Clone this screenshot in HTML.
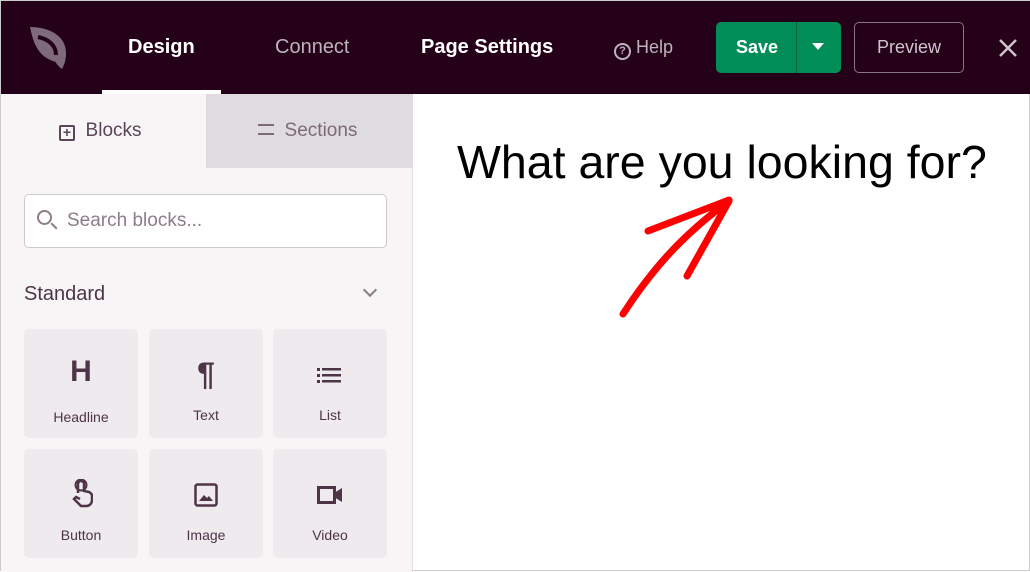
<!DOCTYPE html>
<html><head><style>
*{box-sizing:border-box;margin:0;padding:0}
body{width:1030px;height:571px;overflow:hidden;background:#fff;font-family:"Liberation Sans",sans-serif;position:relative;border:1px solid #ccc}
.top{position:absolute;left:0;top:0;width:1030px;height:93px;background:#250019}
.nav{position:absolute;top:35px;font-size:20px;font-weight:bold;color:#fff}
.side{position:absolute;left:0;top:93px;width:412px;height:478px;background:#f7f5f6;border-right:1px solid #e2dfe2}
.tile{position:absolute;width:114px;height:109px;background:#eeeaee;border-radius:5px;text-align:center;color:#4e3447;font-size:14px}
.tile .l{position:absolute;left:0;right:0;top:78px}
.tile svg{position:absolute;left:45px;top:30px}
</style></head><body>
<div class="top">
<svg style="position:absolute;left:27px;top:24px" width="44" height="46" viewBox="0 0 44 46"><path d="M2 2 C20 2 38 10 38 28 C38 36 36 40 34 44 C28 40 22 30 24 20 C26 14 30 12 32 12 C28 14 26 20 28 28 C30 34 32 38 32 38 C12 34 6 22 2 2Z" fill="#7e6a7a"/><path d="M10 12 C20 14 28 20 28 30" stroke="#250019" stroke-width="4" fill="none"/></svg>
<div class="nav" style="left:127px">Design</div>
<div style="position:absolute;left:101px;top:89px;width:119px;height:4px;background:#fff"></div>
<div class="nav" style="left:274px;color:#bfb2bc;font-weight:normal">Connect</div>
<div class="nav" style="left:420px">Page Settings</div>
<div style="position:absolute;left:613px;top:36px;font-size:18px;color:#bfb2bc"><span style="display:inline-block;width:17px;height:17px;border:2px solid #bfb2bc;border-radius:50%;font-size:11px;text-align:center;line-height:13px;font-weight:bold;vertical-align:-1px">?</span> Help</div>
<div style="position:absolute;left:715px;top:21px;width:125px;height:51px;background:#008d58;border-radius:5px;color:#fff;font-weight:bold;font-size:18px">
<span style="position:absolute;left:20px;top:15px">Save</span>
<div style="position:absolute;left:80px;top:0;width:1px;height:51px;background:#05603f"></div>
<div style="position:absolute;left:96px;top:21px;border:6px solid transparent;border-top:7px solid #fff"></div></div>
<div style="position:absolute;left:853px;top:21px;width:110px;height:51px;border:1px solid #8a7487;border-radius:5px;color:#cfc3cc;font-size:18px;text-align:center;line-height:49px">Preview</div>
<svg style="position:absolute;left:997px;top:37px" width="20" height="20"><path d="M2 2L18 18M18 2L2 18" stroke="#cfc3cc" stroke-width="2.5"/></svg>
</div>
<div class="side">
<div style="position:absolute;left:205px;top:0;width:207px;height:74px;background:#dfdcdf"></div>
<div style="position:absolute;left:58px;top:26px;font-size:19px;color:#5c4557"><span style="display:inline-block;width:16px;height:16px;border:2px solid #5c4557;border-radius:2px;font-size:14px;line-height:11px;text-align:center;font-weight:bold;vertical-align:-1px">+</span>&nbsp; Blocks</div>
<div style="position:absolute;left:257px;top:26px;font-size:19px;color:#7d6a79"><span style="display:inline-block;width:16px;height:11px;border-top:2px solid #7d6a79;border-bottom:2px solid #7d6a79;vertical-align:1px;position:relative"></span>&nbsp; Sections</div>
<div style="position:absolute;left:23px;top:100px;width:363px;height:54px;background:#fff;border:1px solid #cfc8ce;border-radius:5px;color:#8c7c89;font-size:19px;padding:15px 0 0 42px">Search blocks...
<div style="position:absolute;left:12px;top:15px;width:15px;height:15px;border:2px solid #8c7c89;border-radius:50%"></div>
<div style="position:absolute;left:25px;top:30px;width:8px;height:2px;background:#8c7c89;transform:rotate(45deg)"></div></div>
<div style="position:absolute;left:23px;top:189px;font-size:20px;color:#4e3447">Standard</div>
<div style="position:absolute;left:364px;top:191px;width:10px;height:10px;border-right:2px solid #8c7c89;border-bottom:2px solid #8c7c89;transform:rotate(45deg)"></div>
<div class="tile" style="left:23px;top:235px"><div style="position:absolute;left:0;right:0;top:26px;font-size:30px;font-weight:bold">H</div><div class="l" style="top:80px">Headline</div></div>
<div class="tile" style="left:148px;top:235px"><div style="position:absolute;left:0;right:0;top:27px;font-size:32px;font-weight:bold">¶</div><div class="l">Text</div></div>
<div class="tile" style="left:272px;top:235px"><svg width="26" height="20" viewBox="0 0 26 20" style="left:44px;top:37px"><g fill="#4e3447"><rect x="0" y="2" width="3" height="3"/><rect x="0" y="8" width="3" height="3"/><rect x="0" y="14" width="3" height="3"/><rect x="5" y="2" width="19" height="2.5"/><rect x="5" y="8" width="19" height="2.5"/><rect x="5" y="14" width="19" height="2.5"/></g></svg><div class="l">List</div></div>
<div class="tile" style="left:23px;top:355px"><svg width="24" height="30" viewBox="0 0 24 30" style="left:45px;top:30px"><path d="M9 14V5a3 3 0 016 0v7l5 1c2 1 3 2 3 4v4c0 3-2 6-6 6h-5l-7-7 2-2 4 2" fill="none" stroke="#4e3447" stroke-width="2.5"/><circle cx="12" cy="6" r="5.5" fill="none" stroke="#4e3447" stroke-width="2"/></svg><div class="l">Button</div></div>
<div class="tile" style="left:148px;top:355px"><svg width="24" height="24" viewBox="0 0 24 24" style="left:45px;top:34px"><rect x="1.5" y="1.5" width="21" height="21" rx="2" fill="none" stroke="#4e3447" stroke-width="2.5"/><path d="M5 18l5-6 3 3 2-2 4 5z" fill="#4e3447"/></svg><div class="l">Image</div></div>
<div class="tile" style="left:272px;top:355px"><svg width="26" height="18" viewBox="0 0 26 18" style="left:44px;top:37px"><rect x="1.5" y="1.5" width="16" height="15" fill="none" stroke="#4e3447" stroke-width="3"/><path d="M17 7l8-5v14l-8-5z" fill="#4e3447"/></svg><div class="l">Video</div></div>
</div>
<div style="position:absolute;left:456px;top:134px;font-size:46.5px;color:#000;white-space:nowrap">What are you looking for?</div>
<svg style="position:absolute;left:0;top:0" width="1030" height="571"><g stroke="#f00" stroke-width="7" stroke-linecap="round" fill="none"><path d="M622 313 C650 270 680 235 728 200"/><path d="M647 230 L728 199"/><path d="M686 275 L728 200"/></g></svg>
</body></html>
